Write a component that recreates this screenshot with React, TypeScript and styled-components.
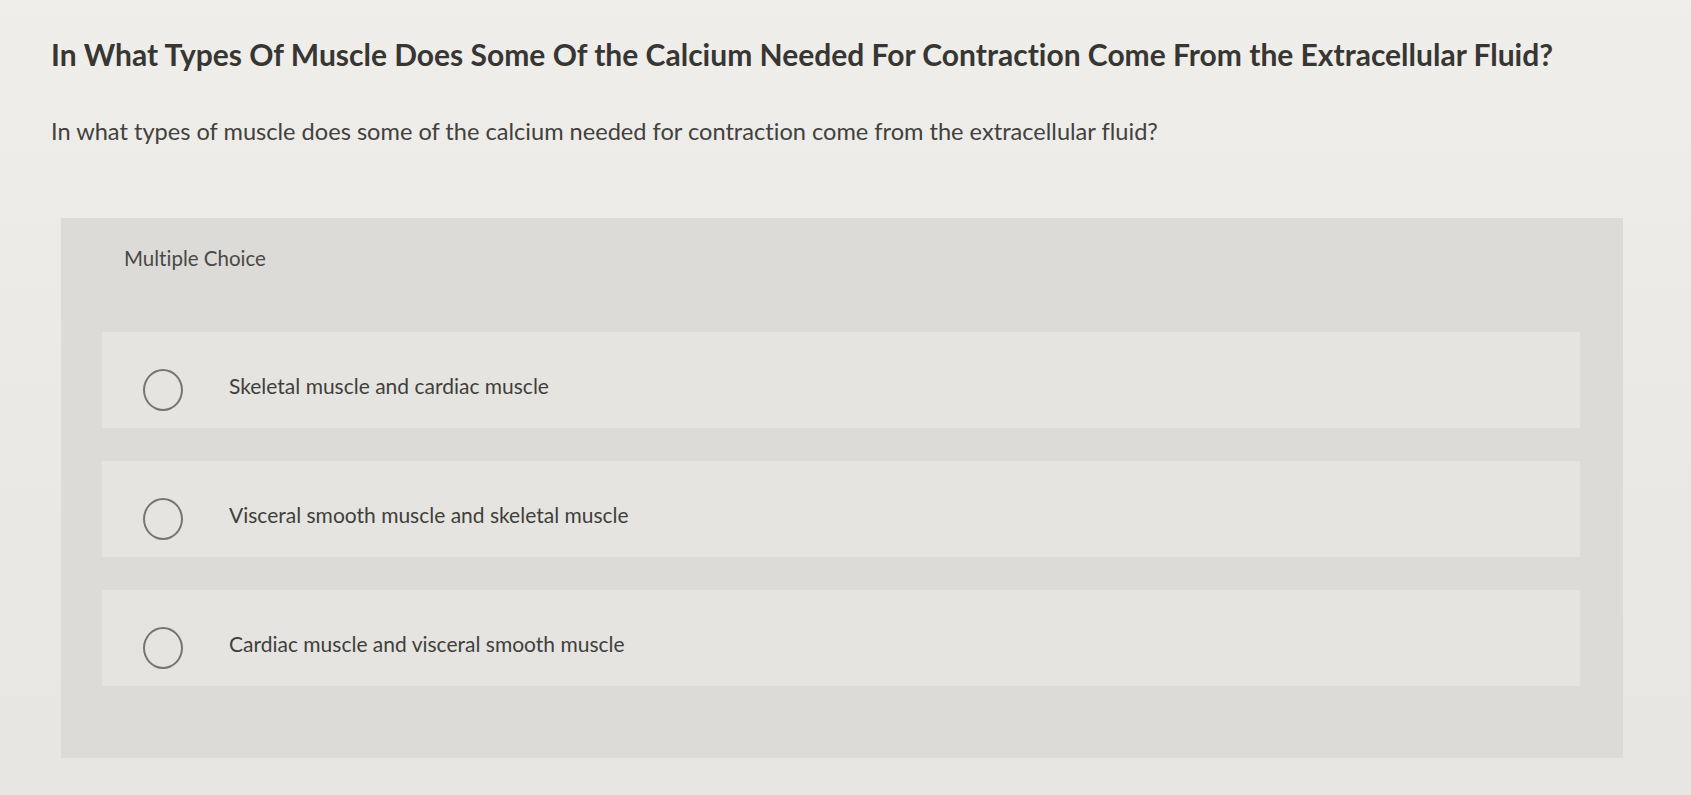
import React from 'react';
import styled, { createGlobalStyle } from 'styled-components';

const GlobalStyle = createGlobalStyle`
  html, body {
    margin: 0;
    padding: 0;
    background: #ebeae6;
  }
  body {
    font-family: Lato, "Open Sans", Arial, sans-serif;
    font-variant-ligatures: none;
    color: #3b3a38;
  }
`;

const options = [
    'Skeletal muscle and cardiac muscle',
    'Visceral smooth muscle and skeletal muscle',
    'Cardiac muscle and visceral smooth muscle',
];

const App: React.FC = () => {
    return (
        <Page>
            <GlobalStyle />
            <Title>In What Types Of Muscle Does Some Of the Calcium Needed For Contraction Come From the Extracellular Fluid?</Title>
            <Question>In what types of muscle does some of the calcium needed for contraction come from the extracellular fluid?</Question>
            <Panel>
                <PanelLabel>Multiple Choice</PanelLabel>
                <OptionList>
                    {options.map((text) => (
                        <OptionRow key={text}>
                            <Radio />
                            <OptionText>{text}</OptionText>
                        </OptionRow>
                    ))}
                </OptionList>
            </Panel>
        </Page>
    );
};

const Page = styled.div`
  width: 1691px;
  height: 795px;
  box-sizing: border-box;
  padding: 36px 68px 0 51px;
  background: linear-gradient(180deg, #efeeea 0%, #ebeae6 40%, #e7e6e2 100%);
  overflow: hidden;
`;

const Title = styled.h1`
  margin: 0;
  font-size: 30px;
  line-height: 36px;
  font-weight: 700;
  color: #373633;
  white-space: nowrap;
`;

const Question = styled.p`
  margin: 44px 0 0;
  font-size: 23.6px;
  line-height: 30px;
  font-weight: 400;
  color: #42413e;
  white-space: nowrap;
`;

const Panel = styled.section`
  margin: 72px 0 0 10px;
  background: #dcdbd7;
  padding: 26px 43px 72px 41px;
`;

const PanelLabel = styled.div`
  padding-left: 22px;
  font-size: 20.5px;
  line-height: 28px;
  color: #4a4946;
  margin-bottom: 60px;
`;

const OptionList = styled.div`
  display: flex;
  flex-direction: column;
  gap: 33px;
`;

const OptionRow = styled.div`
  display: flex;
  align-items: center;
  box-sizing: border-box;
  height: 96px;
  padding: 12px 0 0 41px;
  background: #e5e4e0;
`;

const Radio = styled.span`
  width: 36px;
  height: 38px;
  margin-top: 8px;
  border: 2px solid #767572;
  border-radius: 50%;
  flex-shrink: 0;
`;

const OptionText = styled.span`
  margin-left: 46px;
  font-size: 21px;
  line-height: 28px;
  color: #403f3c;
`;

export default App;
